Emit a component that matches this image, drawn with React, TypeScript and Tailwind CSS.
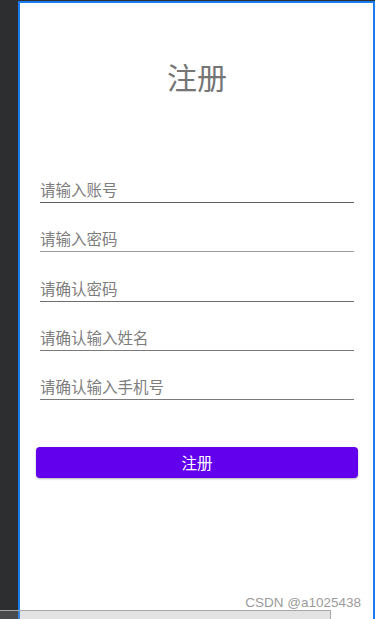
import React from "react";

const fields = [
  { label: "请输入账号", mt: "mt-0", line: "border-[#5f5f5f]" },
  { label: "请输入密码", mt: "mt-[26px]", line: "border-[#9a9a9a]" },
  { label: "请确认密码", mt: "mt-[27px]", line: "border-[#6e6e6e]" },
  { label: "请确认输入姓名", mt: "mt-[26px]", line: "border-[#7a7a7a]" },
  { label: "请确认输入手机号", mt: "mt-[26px]", line: "border-[#7a7a7a]" },
];

export default function App() {
  return (
    <div
      className="relative w-[376px] h-[619px] overflow-hidden bg-[#2d2e30] flex"
      style={{ fontFamily: '"Noto Sans CJK SC", "Noto Sans", sans-serif' }}
    >
      <div className="w-[18px] shrink-0" />
      <div className="mt-[1px] w-[357px] h-[640px] border-2 border-[#1a7cf0] bg-white flex flex-col pl-[20px] pr-[19px]">
        <div className="mt-[57px] h-[32px] leading-[32px] text-[30px] text-[#757575] text-center">
          注册
        </div>
        <div className="mt-[88px] flex flex-col">
          {fields.map((f) => (
            <div key={f.label} className={`${f.mt} border-b ${f.line} pb-[3px]`}>
              <div className="h-[19px] leading-[19px] text-[15.5px] text-[#7d7d7d]">
                {f.label}
              </div>
            </div>
          ))}
        </div>
        <button className="mt-[47px] -mx-[4px] h-[31px] rounded-[4px] bg-[#6200ee] text-white text-[15.5px] leading-[31px] shadow-[0_1px_2px_rgba(0,0,0,0.3)]">
          注册
        </button>
      </div>
      <div className="w-[1px] bg-white" />
      <div
        className="absolute right-[15px] top-[594px] text-[13.5px] leading-[18px] text-[#9b9b9b]"
        style={{ fontFamily: '"Liberation Sans", Arial, sans-serif' }}
      >
        CSDN @a1025438
      </div>
      <div className="absolute left-0 bottom-0 w-[331px] h-[9px] bg-[rgba(152,152,152,0.27)] border-t border-r border-[#a8a8a8]" />
    </div>
  );
}
